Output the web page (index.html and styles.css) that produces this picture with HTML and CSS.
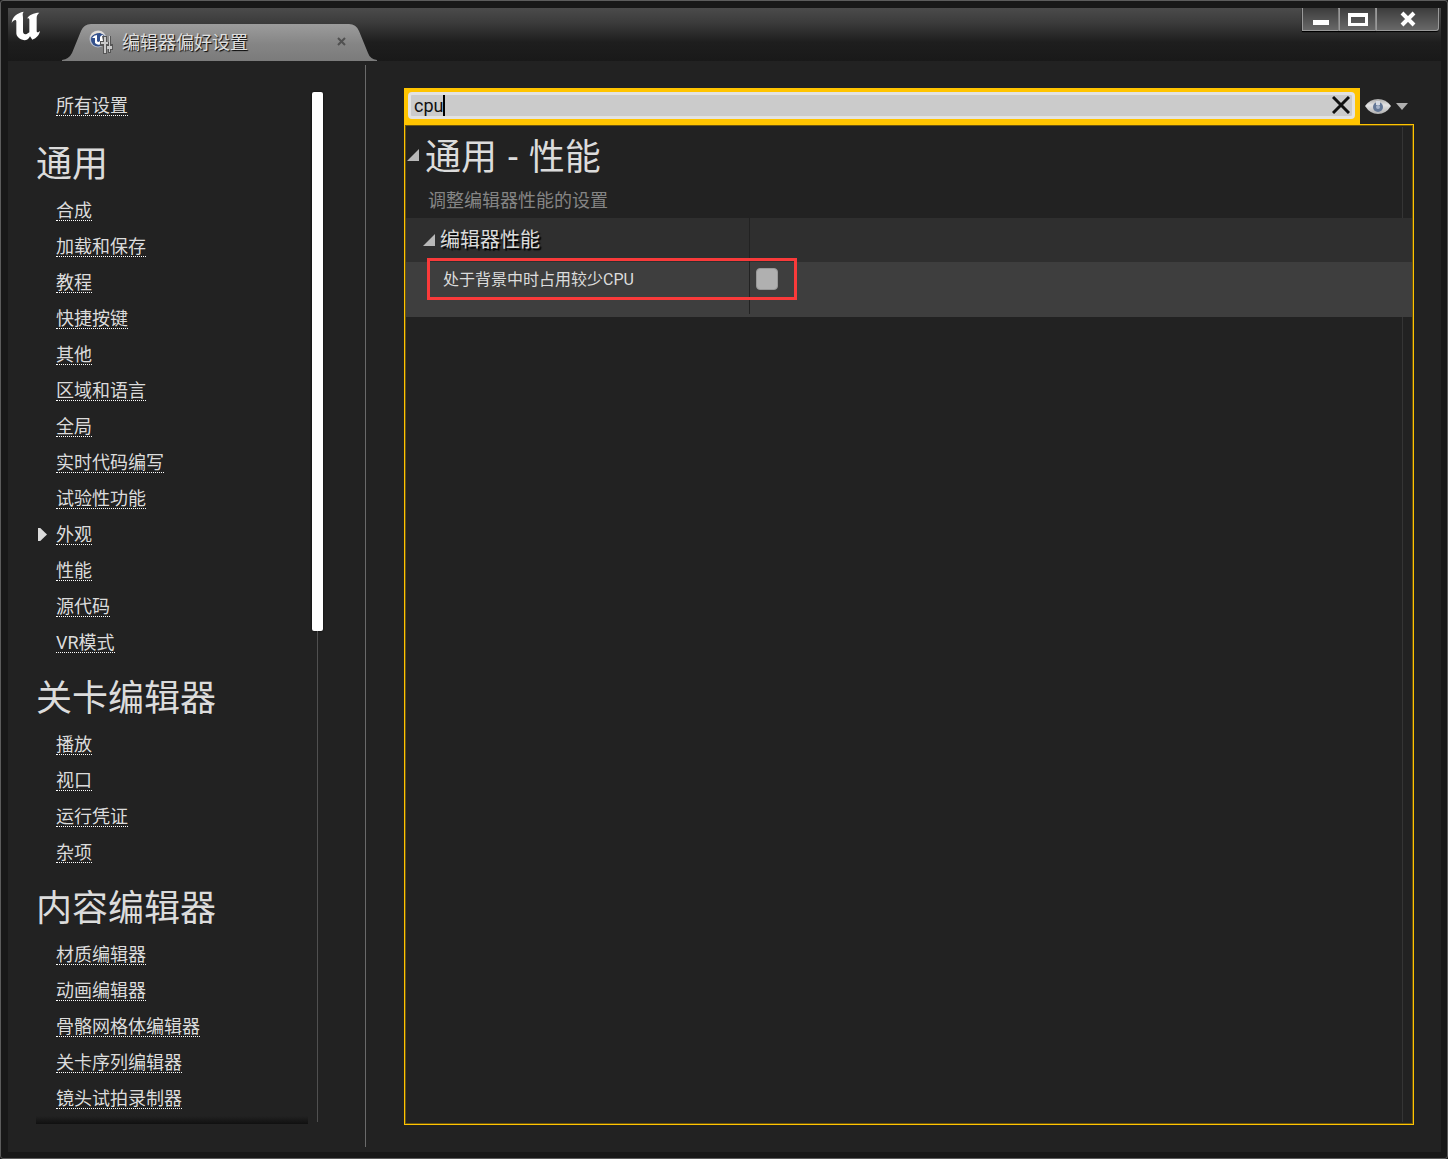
FILE: index.html
```html
<!DOCTYPE html>
<html lang="zh-CN">
  <head>
    <meta charset="UTF-8" />
    <title>编辑器偏好设置</title>
    <link rel="stylesheet" href="styles.css">
  </head>
  <body>
    <div class="window">
      <header class="titlebar">
        <svg class="logo" viewBox="33 33 90 90" aria-hidden="true">
          <path d="M35 69C37 50 51 39 71 35C66 41 69 46 69 53V94C69 101 74 105 80 102L88 97V60C88 55 85 53 81 56C86 45 101 38 118 38C112 43 110 47 110 54V92C110 98 114 99 120 93C117 107 108 115 97 119L90 109C86 117 81 121 73 121C58 118 49 109 49 100V65C49 58 42 58 35 69Z" />
        </svg>
        <div class="tab">
          <svg class="tab-icon" viewBox="0 0 24 24" aria-hidden="true">
            <circle cx="9" cy="9" r="8.500" fill="#b9bfcc" />
            <circle cx="9" cy="9.500" r="7" fill="#34518c" />
            <path d="M1 8A8 8 0 0 1 16 5L11 3Q5 3 1 8Z" fill="#e3ded8" />
            <path d="M3 8Q5 5 8 5V11Q9 13 11 11V7Q12 5 14 5V12L12 14Q9 16 6 13V8Z" fill="#fff" />
            <path d="M13 6H18V12H20V6H22V14H24V20H22V23H19V19H18V24H14V16H11V11H14Z" fill="#555" />
            <path d="M15 7H17V23H15ZM12 12H19V14H12ZM20 6H21V22H20ZM18 16H23V19H18Z" fill="#cacaca" />
          </svg>
          <span class="tab-title">编辑器偏好设置</span>
          <button class="tab-close" type="button" aria-label="关闭标签">
            <svg viewBox="0 0 9 9"><path d="M1 1L8 8M8 1L1 8" /></svg>
          </button>
        </div>
        <div class="window-buttons">
          <button type="button" aria-label="最小化">
            <svg viewBox="0 0 20 16"><path d="M2 9H18V14H2Z" fill="#fff" /></svg>
          </button>
          <button type="button" aria-label="最大化">
            <svg viewBox="0 0 20 16"><path d="M0 2H20V15H0ZM3 6V12H17V6Z" fill="#fff" fill-rule="evenodd" /></svg>
          </button>
          <button class="wide" type="button" aria-label="关闭">
            <svg viewBox="0 0 20 16"><path d="M4 2L16 14M16 2L4 14" stroke="#fff" stroke-width="4" /></svg>
          </button>
        </div>
      </header>

      <div class="content">
        <aside class="sidebar">
          <nav class="nav">
            <ul class="top-links">
              <li><a href="#all">所有设置</a></li>
            </ul>
            <h2>通用</h2>
            <ul>
              <li><a href="#composite">合成</a></li>
              <li><a href="#loading">加载和保存</a></li>
              <li><a href="#tutorials">教程</a></li>
              <li><a href="#shortcuts">快捷按键</a></li>
              <li><a href="#misc">其他</a></li>
              <li><a href="#region">区域和语言</a></li>
              <li><a href="#global">全局</a></li>
              <li><a href="#livecoding">实时代码编写</a></li>
              <li><a href="#experimental">试验性功能</a></li>
              <li class="current"><a href="#appearance">外观</a></li>
              <li><a href="#performance">性能</a></li>
              <li><a href="#source">源代码</a></li>
              <li><a href="#vr">VR模式</a></li>
            </ul>
            <h2>关卡编辑器</h2>
            <ul>
              <li><a href="#play">播放</a></li>
              <li><a href="#viewports">视口</a></li>
              <li><a href="#credentials">运行凭证</a></li>
              <li><a href="#level-misc">杂项</a></li>
            </ul>
            <h2>内容编辑器</h2>
            <ul>
              <li><a href="#material">材质编辑器</a></li>
              <li><a href="#animation">动画编辑器</a></li>
              <li><a href="#skeletal">骨骼网格体编辑器</a></li>
              <li><a href="#sequencer">关卡序列编辑器</a></li>
              <li><a href="#take-recorder">镜头试拍录制器</a></li>
            </ul>
          </nav>
          <div class="scrollbar">
            <div class="thumb"></div>
            <div class="track"></div>
          </div>
        </aside>

        <main class="details">
          <div class="toolbar">
            <div class="search">
              <input type="text" id="search" value="cpu" aria-label="搜索" />
              <span class="caret"></span>
              <button class="clear" type="button" aria-label="清除">
                <svg viewBox="0 0 18 18"><path d="M1 1L17 17M17 1L1 17" /></svg>
              </button>
            </div>
            <button class="view-options" type="button" aria-label="视图选项">
              <svg viewBox="0 0 44 18">
                <defs>
                  <linearGradient id="eye" x1="0" y1="0" x2="0" y2="1">
                    <stop offset="0" stop-color="#a8a8a8" />
                    <stop offset="0.400" stop-color="#e4e4e4" />
                    <stop offset="1" stop-color="#b0b0b0" />
                  </linearGradient>
                </defs>
                <path d="M0 9Q5 2 13 2T26 9Q21 17 13 17T0 9Z" fill="url(#eye)" />
                <circle cx="13" cy="10" r="5" fill="#637796" />
                <circle cx="13" cy="10" r="2" fill="#a5b3c9" />
                <path d="M11 4H15V8H11Z" fill="#d5dae2" />
                <path d="M31 6H43L37 13Z" fill="#b0b0b0" />
              </svg>
            </button>
          </div>

          <div class="panel">
            <div class="panel-body">
              <div class="section-title">
                <svg class="arrow" viewBox="0 0 12 12"><path d="M12 0V12H0Z" /></svg>
                <h1>通用 <span class="dash">-</span> 性能</h1>
              </div>
              <p class="description">调整编辑器性能的设置</p>
              <div class="row category">
                <div class="name">
                  <svg class="arrow" viewBox="0 0 12 12"><path d="M12 0V12H0Z" /></svg>
                  <h3>编辑器性能</h3>
                </div>
                <div class="value"></div>
              </div>
              <div class="row property">
                <div class="name"><label for="less-cpu">处于背景中时占用较少CPU</label></div>
                <div class="value"><input type="checkbox" id="less-cpu" /></div>
                <div class="highlight"></div>
              </div>
            </div>
            <div class="panel-gutter"></div>
          </div>
        </main>
      </div>
    </div>
  </body>
</html>
```

FILE: styles.css
```css
* {
  box-sizing: border-box;
}

body {
  margin: 0;
  font-family: Roboto, "Noto Sans CJK SC", sans-serif;
  font-size: 18px;
  color: #dcdcdc;
  background-color: #181818;
}

h1,
h2,
h3,
p,
ul {
  margin: 0;
  padding: 0;
  font-weight: 400;
}

button {
  padding: 0;
  border: none;
  background: none;
}

svg {
  display: block;
}

.window {
  display: flex;
  flex-direction: column;
  height: 100vh;
  padding: 7px 6px 6px 7px;
  border: 1px solid #5c5c5c;
  border-radius: 3px;
  background-color: #181818;
}

/* Title bar */
.titlebar {
  display: flex;
  flex: none;
  align-items: flex-start;
  height: 53px;
  background: linear-gradient(#4b4b4b 0, #3c3c3c 14px, #1e1e1e 34px, #191919 100%);
}

.logo {
  width: 30px;
  height: 30px;
  margin: 3px 24px 0 3px;
  fill: #fff;
}

.tab {
  display: flex;
  align-items: center;
  width: 315px;
  height: 37px;
  margin-top: 16px;
  margin-left: -3px;
  padding: 0 31px 2px 27px;
  background: linear-gradient(#9c9c9c, #858585 20px, #7b7b7b);
  clip-path: path("M0 37V36Q7 35 10 29L19 7Q22 0 29 0H287Q294 0 297 7L306 29Q308 35 315 36V37Z");
}

.tab-icon {
  width: 24px;
  height: 24px;
  margin-right: 9px;
}

.tab-title {
  flex: 1;
  padding-bottom: 2px;
  color: #e0e0e0;
  text-shadow: 1px 1px 1px #000;
}

.tab-close svg {
  width: 9px;
  height: 9px;
  fill: none;
  stroke: #505050;
  stroke-width: 2;
}

.window-buttons {
  display: flex;
  margin-left: auto;
  margin-right: 2px;
}

.window-buttons button {
  display: flex;
  align-items: center;
  justify-content: center;
  width: 37px;
  height: 23px;
  padding-bottom: 1px;
  border: 1px solid #999;
  border-top: none;
  background: linear-gradient(#3c3c3c, #686868);
  box-shadow: 0 1px 1px #000;
}

.window-buttons button.wide {
  width: 63px;
  border-radius: 0 0 3px 0;
}

.window-buttons svg {
  width: 20px;
  height: 16px;
}

.content {
  display: flex;
  flex: 1;
  min-height: 0;
  background-color: #222;
}

/* Sidebar */
.sidebar {
  display: flex;
  flex: none;
  width: 358px;
  margin: 4px 0 5px;
  padding: 22px 42px 23px 28px;
  border-right: 1px solid #6a6a6a;
}

.nav {
  position: relative;
  flex: 1;
  overflow: hidden;
}

/* Fade where the list is cut off */
.nav::after {
  content: "";
  position: absolute;
  left: 0;
  right: 0;
  bottom: 0;
  height: 8px;
  background: linear-gradient(transparent, #101010);
}

.nav h2 {
  height: 66px;
  font-size: 36px;
  line-height: 78px;
}

.nav ul {
  list-style: none;
}

.nav ul.top-links {
  margin-bottom: 3px;
}

.nav li {
  height: 36px;
  padding: 4px 0 0 20px;
}

.nav a {
  display: inline-block;
  height: 25px;
  line-height: 30px;
  color: #dcdcdc;
  text-decoration: none;
  border-bottom: 1px dotted #fff;
}

.nav li.current {
  position: relative;
}

.nav li.current::before {
  content: "";
  position: absolute;
  top: 12px;
  left: 2px;
  width: 9px;
  height: 13px;
  background-color: #dcdcdc;
  clip-path: polygon(0 0, 25% 0, 100% 50%, 25% 100%, 0 100%);
}

.scrollbar {
  display: flex;
  flex-direction: column;
  align-items: center;
  width: 11px;
  margin: 5px 0 2px 4px;
}

.thumb {
  width: 11px;
  height: 52.3%;
  border-radius: 2px;
  background-color: #fff;
  box-shadow: 0 0 2px #000;
}

.track {
  flex: 1;
  width: 1px;
  background-color: #505050;
}

/* Details */
.details {
  display: flex;
  flex: 1;
  flex-direction: column;
  min-width: 0;
  padding: 27px 27px 27px 38px;
}

.toolbar {
  display: flex;
  align-items: center;
  height: 36px;
}

.search {
  position: relative;
  display: flex;
  flex: 1;
  height: 36px;
  padding: 4px 5px 5px 4px;
  background-color: #ffc400;
}

.search input {
  width: 100%;
  padding: 0 32px 0 3px;
  border: 3px solid #e2e2e2;
  border-radius: 4px;
  outline: none;
  background-color: #cbcbcb;
  font: inherit;
  color: #111;
}

.caret {
  position: absolute;
  top: 7px;
  left: 39px;
  width: 2px;
  height: 21px;
  background-color: #000;
}

.clear {
  position: absolute;
  top: 8px;
  right: 10px;
}

.clear svg {
  width: 18px;
  height: 18px;
  stroke: #111;
  stroke-width: 3;
}

.view-options {
  margin: 0 5px 0 5px;
}

.view-options svg {
  width: 44px;
  height: 18px;
}

.panel {
  display: flex;
  flex: 1;
  border: 1px solid #ffc400;
  box-shadow: inset 0 0 0 1px #6b5510;
}

.panel-body {
  flex: 1;
}

.panel-gutter {
  width: 11px;
  margin: 2px 0;
  border-left: 1px solid #353535;
}

.arrow {
  flex: none;
  width: 12px;
  height: 12px;
  fill: #b8b8b8;
}

.section-title {
  display: flex;
  align-items: center;
  height: 60px;
  padding-left: 2px;
}

.section-title h1 {
  margin-left: 6px;
  padding-top: 6px;
  font-size: 36px;
  line-height: 54px;
}

.section-title .dash {
  margin: 0 2px;
}

.description {
  height: 33px;
  padding-left: 23px;
  line-height: 32px;
  color: #858585;
}

.row {
  position: relative;
  display: grid;
  grid-template-columns: 344px 1fr;
  margin-left: 1px;
  margin-right: -10px;
}

.row .name {
  display: flex;
  align-items: center;
  border-right: 1px solid #222;
}

.category {
  height: 44px;
  background-color: #2f2f2f;
}

.category .name {
  padding-left: 17px;
}

.category h3 {
  margin-left: 5px;
  padding-bottom: 4px;
  font-size: 20px;
  text-shadow: 2px 2px 1px #000;
}

.property {
  height: 55px;
  padding-bottom: 3px;
  background-color: #3e3e3e;
}

.property .name {
  padding: 0 0 20px 37px;
  font-size: 16px;
}

.property .value {
  display: flex;
  align-items: center;
  padding: 0 0 18px 6px;
}

.property input {
  width: 22px;
  height: 22px;
  margin: 0;
  appearance: none;
  border: 1px solid #989898;
  border-radius: 4px;
  background-color: #b0b0b0;
}

/* Red frame around the matching property */
.highlight {
  position: absolute;
  top: -4px;
  left: 21px;
  width: 370px;
  height: 42px;
  border: 3px solid #f93a3a;
  pointer-events: none;
}
```
